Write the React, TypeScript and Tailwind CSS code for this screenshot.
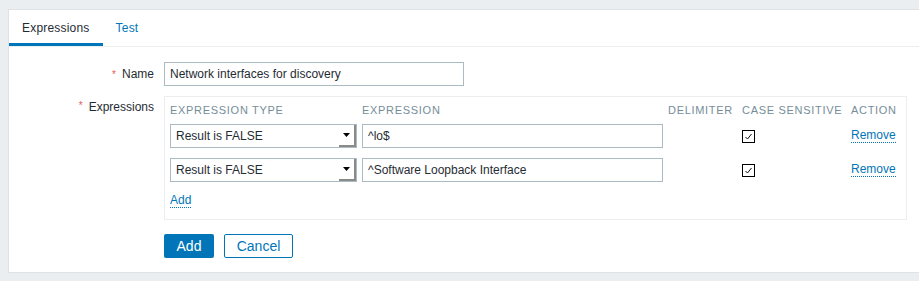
import { ReactNode } from 'react';

const rows = ['^lo$', '^Software Loopback Interface'];

function Label({ children, top }: { children: ReactNode; top?: boolean }) {
  return (
    <div className={`flex justify-end ${top ? 'items-start pt-[4px]' : 'items-center'}`}>
      <span className="relative top-[1px] mr-[6px] text-[10px] leading-none text-[#e45959]">*</span>
      <span className="leading-[14px]">{children}</span>
    </div>
  );
}

function Select({ value }: { value: string }) {
  return (
    <div className="flex h-[24px] items-center border border-[#acbbc2] bg-white pl-[5px]">
      <span className="flex-1">{value}</span>
      <span className="flex h-[22px] w-[17px] items-center justify-center border-b-2 border-r-2 border-[#8a8a8a] bg-white">
        <svg width="7" height="4" viewBox="0 0 7 4">
          <path d="M0 0h7L3.5 4z" fill="#000" />
        </svg>
      </span>
    </div>
  );
}

function Check() {
  return (
    <div className="flex h-[24px] items-center">
      <span className="flex h-[13px] w-[13px] items-center justify-center border border-black bg-white">
        <svg width="9" height="9" viewBox="0 0 9 9">
          <path d="M1.5 5l2 2 4-5" fill="none" stroke="#111" strokeWidth="1" />
        </svg>
      </span>
    </div>
  );
}

const head = 'mb-[8px] h-[12px] text-[11px] uppercase leading-[12px] tracking-[0.7px] text-[#768d99]';

export default function App() {
  return (
    <div className="h-[281px] overflow-hidden bg-[#ebeef0] pl-[8px] pt-[9px] text-[12px] text-[#1f2c33] [font-family:'Liberation_Sans',Arial,sans-serif]">
      <div className="h-[264px] border border-r-0 border-[#dde3e6] bg-white">
        {/* Tabs */}
        <div className="flex h-[37px] border-b border-[#ebeef0]">
          <div className="flex items-center border-b-[3px] border-[#0275b8] px-[13px] pt-[3px] tracking-[0.2px]">Expressions</div>
          <div className="flex items-center px-[13px] text-[#0275b8] tracking-[0.2px]">Test</div>
        </div>

        {/* Form */}
        <div className="grid grid-cols-[145px_auto] gap-x-[10px] gap-y-[10px] pt-[15px]">
          <Label>Name</Label>
          <div>
            <div className="flex h-[24px] w-[300px] items-center border border-[#acbbc2] pl-[5px]">
              Network interfaces for discovery
            </div>
          </div>

          <Label top>Expressions</Label>
          <div className="h-[124px] w-[743px] border border-[#ebeef0] px-[5px] pt-[7px]">
            <div className="grid grid-cols-[187px_301px_69px_104px_auto] gap-x-[5px]">
              <div className={head}>Expression type</div>
              <div className={head}>Expression</div>
              <div className={head}>Delimiter</div>
              <div className={head}>Case sensitive</div>
              <div className={head}>Action</div>
              {rows.map((r) => (
                <div key={r} className="contents">
                  <div className="mb-[10px]"><Select value="Result is FALSE" /></div>
                  <div className="mb-[10px] flex h-[24px] items-center border border-[#acbbc2] pl-[5px]">{r}</div>
                  <div />
                  <Check />
                  <div className="flex h-[24px] items-center">
                    <span className="border-b border-dotted border-[#0275b8] leading-[13px] text-[#0275b8]">Remove</span>
                  </div>
                </div>
              ))}
            </div>
            <div className="-mt-[1px]">
              <span className="border-b border-dotted border-[#0275b8] leading-[13px] text-[#0275b8]">Add</span>
            </div>
          </div>

          <div />
          <div className="flex gap-[10px] pt-[4px]">
            <button className="h-[24px] w-[50px] rounded-[2px] bg-[#0275b8] text-[14px] text-white">Add</button>
            <button className="h-[24px] w-[69px] rounded-[2px] border border-[#0275b8] bg-white text-[14px] text-[#0275b8]">Cancel</button>
          </div>
        </div>
      </div>
    </div>
  );
}
